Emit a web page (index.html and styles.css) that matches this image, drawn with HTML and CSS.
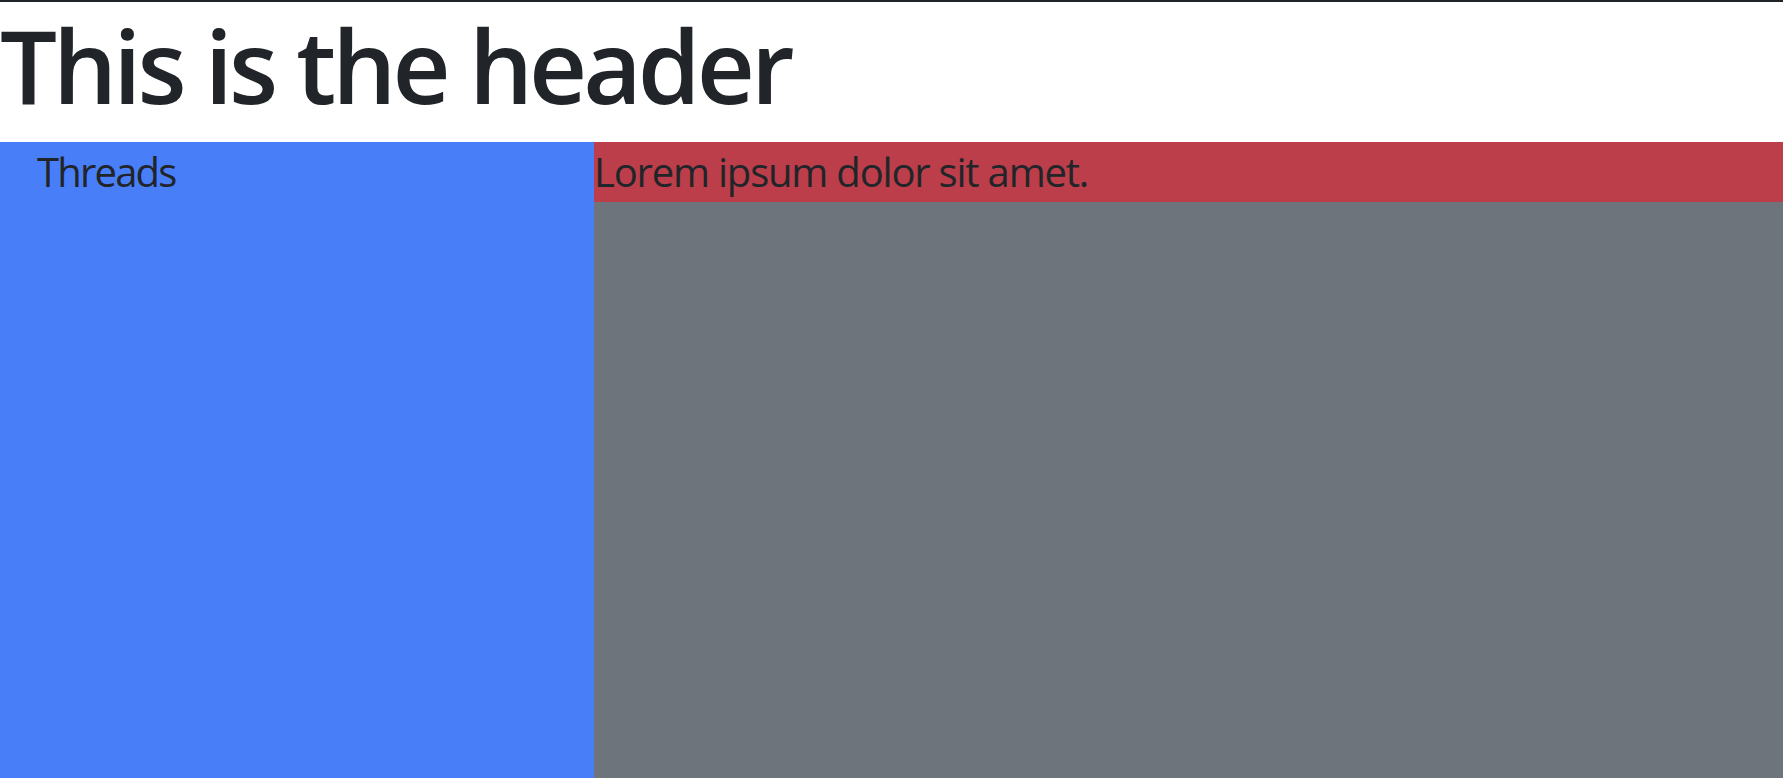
FILE: index.html
```html
<!DOCTYPE html>
<html lang="en">
<head>
<meta charset="utf-8">
<title>Header</title>
<link rel="stylesheet" href="styles.css">
</head>
<body>
<div class="page">
  <h1 class="title">This is the header</h1>
  <div class="main">
    <aside class="sidebar">
      <ul class="threads">
        <li>Threads</li>
      </ul>
    </aside>
    <section class="content">
      <div class="bar">Lorem ipsum dolor sit amet.</div>
      <div class="body"></div>
    </section>
  </div>
</div>
</body>
</html>
```

FILE: styles.css
```css
html, body {
  margin: 0;
  padding: 0;
  height: 100%;
}
body {
  font-family: "Open Sans", "Noto Sans", sans-serif;
  color: #212529;
  background: #fff;
  overflow: hidden;
}
.page {
  display: flex;
  flex-direction: column;
  height: 100%;
  border-top: 2px solid #212529;
  box-sizing: border-box;
}
.title {
  margin: 0 0 14px 0;
  font-size: 101px;
  font-weight: 600;
  line-height: 126px;
  letter-spacing: -4px;
}
.main {
  flex: 1;
  display: flex;
}
.sidebar {
  width: 594px;
  flex: none;
  background: #487ef8;
}
.threads {
  list-style: none;
  margin: 0;
  padding: 0 0 0 37px;
  font-size: 40px;
  line-height: 60px;
  letter-spacing: -1.8px;
}
.content {
  flex: 1;
  display: flex;
  flex-direction: column;
  background: #6e747c;
}
.bar {
  background: #bc3e4a;
  font-size: 40px;
  line-height: 60px;
  letter-spacing: -1.2px;
}
.body {
  flex: 1;
}
```
